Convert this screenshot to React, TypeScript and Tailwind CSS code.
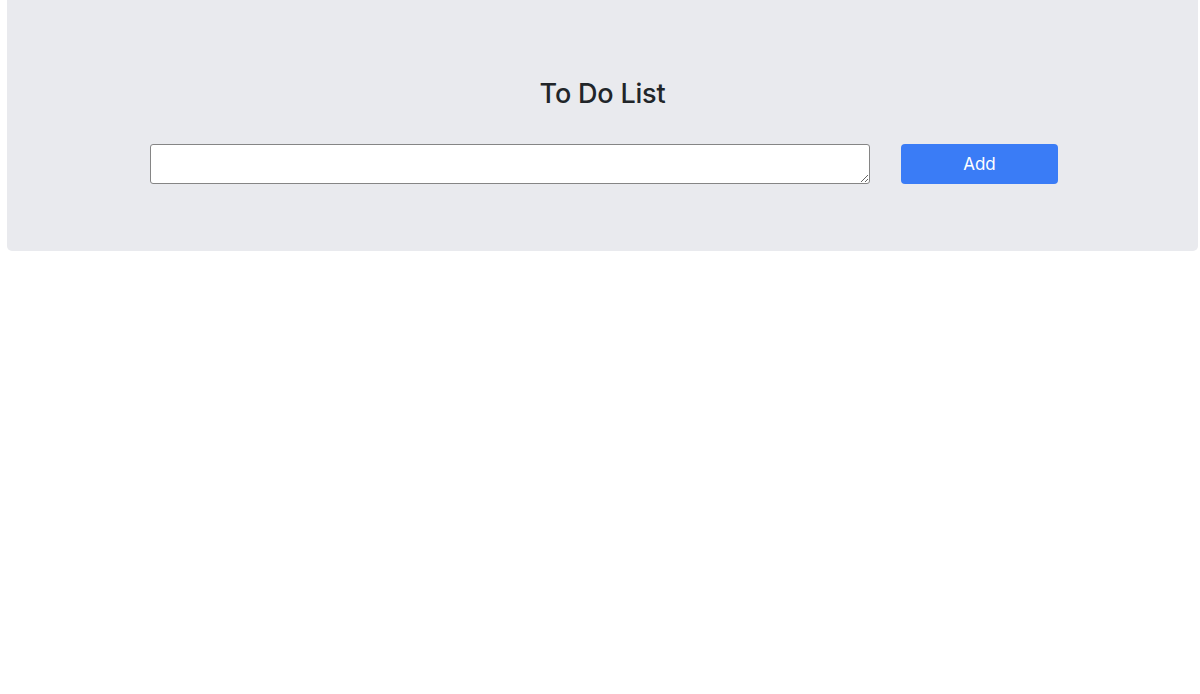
import React from "react";

export default function App() {
  return (
    <div className="min-h-[694px] bg-white" style={{ fontFamily: "Inter, 'Liberation Sans', sans-serif" }}>
      <div className="ml-[7px] mr-[2px] h-[251px] rounded-b-[5px] bg-[#e9eaee] pt-[76px]">
        <h1 className="text-center text-[27px] leading-[36px] font-medium text-[#212529] tracking-[-0.2px]">To Do List</h1>
        <div className="mt-[32px] flex justify-center gap-[31px] pl-[3px]">
          <textarea className="resize h-[40px] w-[720px] rounded-[3px] border border-[#858585] bg-white" />
          <button className="h-[40px] w-[157px] rounded-[4px] bg-[#3a7cf6] pt-[2px] text-[17px] text-white">Add</button>
        </div>
      </div>
    </div>
  );
}
